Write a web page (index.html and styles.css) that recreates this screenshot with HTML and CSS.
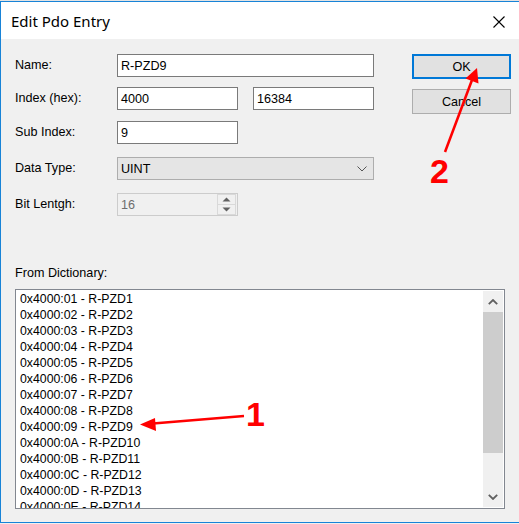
FILE: index.html
```html
<!DOCTYPE html>
<html>
<head>
<meta charset="utf-8">
<title>Edit Pdo Entry</title>
<link rel="stylesheet" href="styles.css">
</head>
<body>
<div class="strip"></div>
<div class="window">
    <div class="titlebar">
        <span class="title">Edit Pdo Entry</span>
        <svg class="close" width="12" height="12" viewBox="0 0 12 12">
            <path d="M0.5 0.5 L11.5 11.5 M11.5 0.5 L0.5 11.5" stroke="#000" stroke-width="1.1" fill="none"/>
        </svg>
    </div>
    <div class="content">
        <div class="top">
            <div class="fields">
                <div class="row row-name">
                    <span class="label">Name:</span>
                    <div class="textbox wide">R-PZD9</div>
                </div>
                <div class="row row-index">
                    <span class="label">Index (hex):</span>
                    <div class="textbox half">4000</div>
                    <div class="textbox half second">16384</div>
                </div>
                <div class="row row-sub">
                    <span class="label">Sub Index:</span>
                    <div class="textbox half">9</div>
                </div>
                <div class="row row-type">
                    <span class="label">Data Type:</span>
                    <div class="combo wide">
                        <span>UINT</span>
                        <svg width="10" height="6" viewBox="0 0 10 6"><path d="M0.5 0.5 L5 5 L9.5 0.5" stroke="#555" stroke-width="1" fill="none"/></svg>
                    </div>
                </div>
                <div class="row row-bits">
                    <span class="label">Bit Lentgh:</span>
                    <div class="spinner half">
                        <span class="spin-value">16</span>
                        <div class="spin-buttons">
                            <div class="spin-btn"><svg width="9" height="5" viewBox="0 0 9 5"><path d="M0.5 4.5 L4.5 0.5 L8.5 4.5 Z" fill="#606060"/></svg></div>
                            <div class="spin-btn"><svg width="9" height="5" viewBox="0 0 9 5"><path d="M0.5 0.5 L4.5 4.5 L8.5 0.5 Z" fill="#606060"/></svg></div>
                        </div>
                    </div>
                </div>
            </div>
            <div class="buttons">
                <div class="btn btn-default">OK</div>
                <div class="btn">Cancel</div>
            </div>
        </div>
        <div class="dict-label">From Dictionary:</div>
        <div class="listbox">
            <ul class="items">
                <li>0x4000:01 - R-PZD1</li>
                <li>0x4000:02 - R-PZD2</li>
                <li>0x4000:03 - R-PZD3</li>
                <li>0x4000:04 - R-PZD4</li>
                <li>0x4000:05 - R-PZD5</li>
                <li>0x4000:06 - R-PZD6</li>
                <li>0x4000:07 - R-PZD7</li>
                <li>0x4000:08 - R-PZD8</li>
                <li>0x4000:09 - R-PZD9</li>
                <li>0x4000:0A - R-PZD10</li>
                <li>0x4000:0B - R-PZD11</li>
                <li>0x4000:0C - R-PZD12</li>
                <li>0x4000:0D - R-PZD13</li>
                <li>0x4000:0E - R-PZD14</li>
            </ul>
            <div class="vscroll">
                <div class="sb-arrow"><svg width="10" height="6" viewBox="0 0 10 6"><path d="M0.8 5.2 L5 1 L9.2 5.2" stroke="#606060" stroke-width="1.8" fill="none"/></svg></div>
                <div class="sb-track"><div class="sb-thumb"></div></div>
                <div class="sb-arrow"><svg width="10" height="6" viewBox="0 0 10 6"><path d="M0.8 0.8 L5 5 L9.2 0.8" stroke="#606060" stroke-width="1.8" fill="none"/></svg></div>
            </div>
        </div>
    </div>
</div>
<svg class="marks" width="519" height="524" viewBox="0 0 519 524">
    <!-- arrow 1 -->
    <line x1="244" y1="416" x2="153" y2="423.5" stroke="#ff0000" stroke-width="2.5"/>
    <polygon points="140,424.5 155,418 156,431" fill="#ff0000"/>
    <text x="246" y="426" class="mark-num">1</text>
    <!-- arrow 2 -->
    <line x1="445" y1="152" x2="472" y2="80" stroke="#ff0000" stroke-width="2.5"/>
    <polygon points="477,68 465.5,78.5 478.5,83.5" fill="#ff0000"/>
    <text x="430" y="183" class="mark-num">2</text>
</svg>
</body>
</html>
```

FILE: styles.css
```css
body {
    margin: 0;
    width: 519px;
    height: 524px;
    overflow: hidden;
    background-color: #f0f0f0;
    font-family: "Liberation Sans", Arial, sans-serif;
    font-size: 12.6px;
    color: #000;
}
.strip {
    height: 1px;
    background-color: #e3e3e3;
}
.window {
    box-sizing: border-box;
    height: 522px;
    border-top: 1px solid #1883d7;
    border-left: 1px solid #1883d7;
    border-bottom: 1px solid #1883d7;
    background-color: #f0f0f0;
}
.titlebar {
    height: 37px;
    background-color: #fff;
    display: flex;
    align-items: center;
    justify-content: space-between;
    padding-left: 10px;
    padding-right: 14px;
}
.title {
    font-family: "Noto Sans", "Open Sans", sans-serif;
    font-size: 15px;
}
.close {
    display: block;
    margin-top: 2px;
}
.content {
    padding-left: 14px;
}
.top {
    display: flex;
    padding-top: 15px;
}
.fields {
    width: 359px;
}
.row {
    display: flex;
    align-items: center;
    height: 23px;
}
.row-index { margin-top: 10px; }
.row-sub { margin-top: 11px; }
.row-type { margin-top: 13px; }
.row-bits { margin-top: 13px; }
.label {
    width: 102px;
    position: relative;
    top: -1px;
}
.textbox, .combo, .spinner {
    box-sizing: border-box;
    height: 23px;
    display: flex;
    align-items: center;
    padding-left: 3px;
}
.textbox {
    border: 1px solid #7a7a7a;
    background-color: #fff;
}
.wide { width: 257px; }
.half { width: 121px; }
.second { margin-left: 15px; }
.combo {
    border: 1px solid #adadad;
    background-color: #e5e5e5;
    justify-content: space-between;
    padding-right: 6px;
}
.combo svg { display: block; margin-top: 1px; }
.spinner {
    border: 1px solid #cccccc;
    background-color: #f0f0f0;
    color: #6d6d6d;
    padding-right: 1px;
    justify-content: space-between;
}
.spin-buttons {
    width: 19px;
    height: 21px;
    display: flex;
    flex-direction: column;
}
.spin-btn {
    box-sizing: border-box;
    flex: 1;
    border: 1px solid #d9d9d9;
    display: flex;
    align-items: center;
    justify-content: center;
}
.spin-btn + .spin-btn { border-top: none; }
.spin-btn svg { display: block; }
.buttons {
    margin-left: 38px;
    display: flex;
    flex-direction: column;
    gap: 10px;
}
.btn {
    box-sizing: border-box;
    width: 99px;
    height: 25px;
    border: 1px solid #adadad;
    background-color: #e1e1e1;
    display: flex;
    align-items: center;
    justify-content: center;
}
.btn-default {
    border: 2px solid #0078d7;
}
.dict-label {
    margin-top: 50px;
    line-height: 15px;
}
.listbox {
    box-sizing: border-box;
    margin-top: 8px;
    width: 490px;
    height: 220px;
    border: 1px solid #828790;
    background-color: #fff;
    display: flex;
}
.items {
    flex: 1;
    margin: 0;
    padding: 1px 0 0 4px;
    list-style: none;
    overflow: hidden;
    font-size: 12.3px;
    line-height: 16px;
}
.vscroll {
    width: 20px;
    margin: 1px 1px 1px 0;
    background-color: #f0f0f0;
    display: flex;
    flex-direction: column;
}
.sb-arrow {
    height: 21px;
    display: flex;
    align-items: center;
    justify-content: center;
}
.sb-arrow svg { display: block; }
.sb-track {
    flex: 1;
}
.sb-thumb {
    height: 141px;
    background-color: #cdcdcd;
}
.marks {
    position: absolute;
    left: 0;
    top: 0;
    pointer-events: none;
}
.mark-num {
    font-family: "Liberation Sans", Arial, sans-serif;
    font-weight: bold;
    font-size: 34px;
    fill: #ff0000;
}
```
